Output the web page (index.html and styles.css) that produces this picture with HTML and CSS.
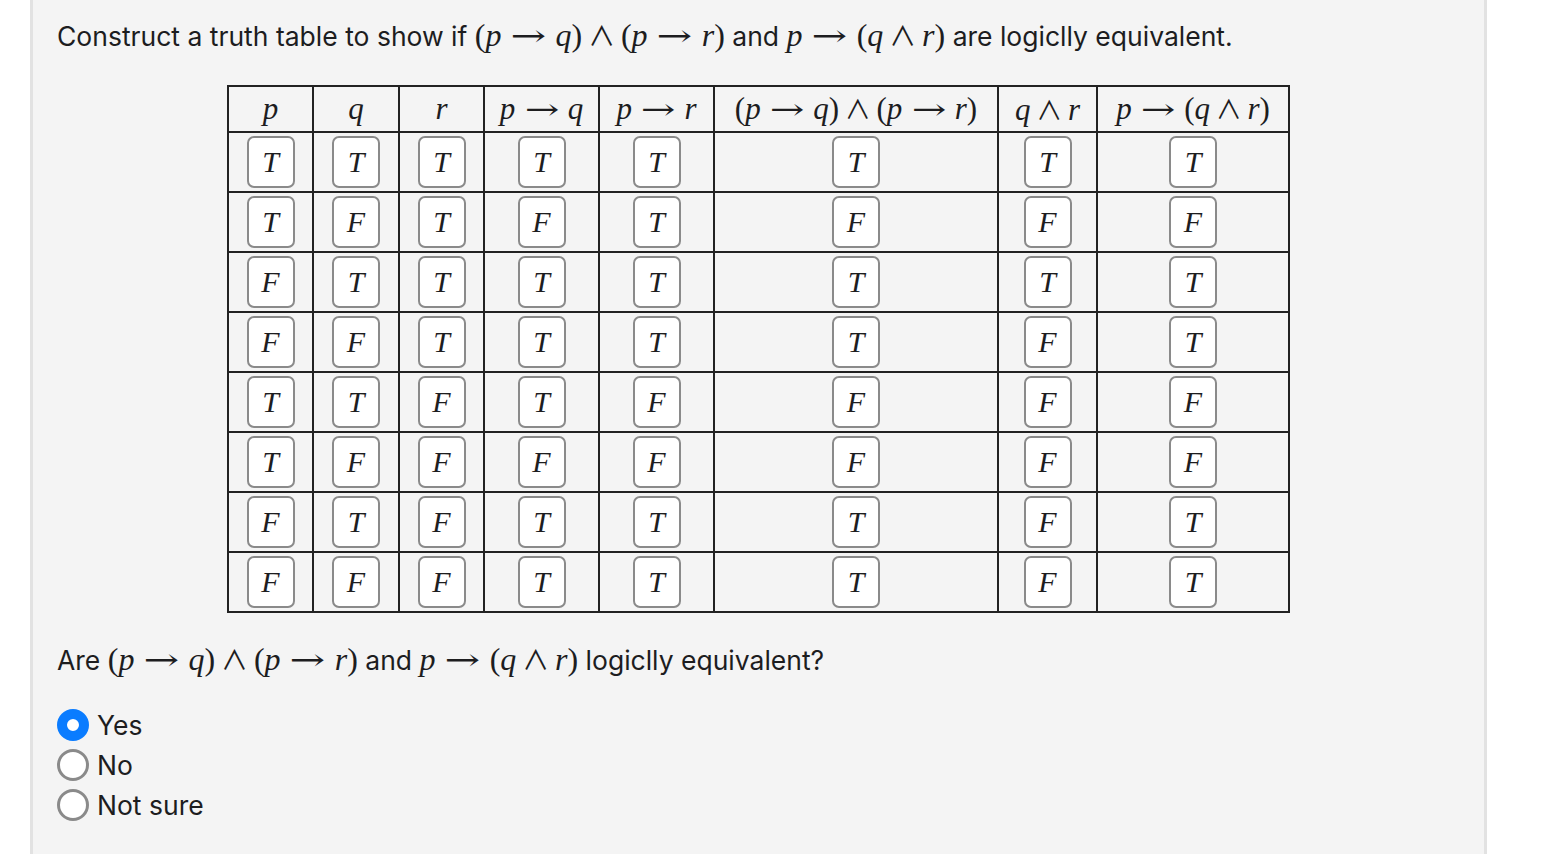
FILE: index.html
```html
<!DOCTYPE html>
<html>
<head>
<meta charset="utf-8">
<link rel="stylesheet" href="styles.css">
</head>
<body>
<div class="panel">
  <p class="title">Construct a truth table to show if <span class="m">(<i>p</i><span class="rel">→</span><i>q</i>)<span class="bin">∧</span>(<i>p</i><span class="rel">→</span><i>r</i>)</span> and <span class="m"><i>p</i><span class="rel">→</span>(<i>q</i><span class="bin">∧</span><i>r</i>)</span> are logiclly equivalent.</p>
  <table class="tt">
    <colgroup>
      <col class="c1"><col class="c2"><col class="c3"><col class="c4"><col class="c5"><col class="c6"><col class="c7"><col class="c8">
    </colgroup>
    <thead>
      <tr>
        <th><i>p</i></th>
        <th><i>q</i></th>
        <th><i>r</i></th>
        <th><i>p</i><span class="rel">→</span><i>q</i></th>
        <th><i>p</i><span class="rel">→</span><i>r</i></th>
        <th>(<i>p</i><span class="rel">→</span><i>q</i>)<span class="bin">∧</span>(<i>p</i><span class="rel">→</span><i>r</i>)</th>
        <th><i>q</i><span class="bin">∧</span><i>r</i></th>
        <th><i>p</i><span class="rel">→</span>(<i>q</i><span class="bin">∧</span><i>r</i>)</th>
      </tr>
    </thead>
    <tbody>
      <tr><td><span class="box">T</span></td><td><span class="box">T</span></td><td><span class="box">T</span></td><td><span class="box">T</span></td><td><span class="box">T</span></td><td><span class="box">T</span></td><td><span class="box">T</span></td><td><span class="box">T</span></td></tr>
      <tr><td><span class="box">T</span></td><td><span class="box">F</span></td><td><span class="box">T</span></td><td><span class="box">F</span></td><td><span class="box">T</span></td><td><span class="box">F</span></td><td><span class="box">F</span></td><td><span class="box">F</span></td></tr>
      <tr><td><span class="box">F</span></td><td><span class="box">T</span></td><td><span class="box">T</span></td><td><span class="box">T</span></td><td><span class="box">T</span></td><td><span class="box">T</span></td><td><span class="box">T</span></td><td><span class="box">T</span></td></tr>
      <tr><td><span class="box">F</span></td><td><span class="box">F</span></td><td><span class="box">T</span></td><td><span class="box">T</span></td><td><span class="box">T</span></td><td><span class="box">T</span></td><td><span class="box">F</span></td><td><span class="box">T</span></td></tr>
      <tr><td><span class="box">T</span></td><td><span class="box">T</span></td><td><span class="box">F</span></td><td><span class="box">T</span></td><td><span class="box">F</span></td><td><span class="box">F</span></td><td><span class="box">F</span></td><td><span class="box">F</span></td></tr>
      <tr><td><span class="box">T</span></td><td><span class="box">F</span></td><td><span class="box">F</span></td><td><span class="box">F</span></td><td><span class="box">F</span></td><td><span class="box">F</span></td><td><span class="box">F</span></td><td><span class="box">F</span></td></tr>
      <tr><td><span class="box">F</span></td><td><span class="box">T</span></td><td><span class="box">F</span></td><td><span class="box">T</span></td><td><span class="box">T</span></td><td><span class="box">T</span></td><td><span class="box">F</span></td><td><span class="box">T</span></td></tr>
      <tr><td><span class="box">F</span></td><td><span class="box">F</span></td><td><span class="box">F</span></td><td><span class="box">T</span></td><td><span class="box">T</span></td><td><span class="box">T</span></td><td><span class="box">F</span></td><td><span class="box">T</span></td></tr>
    </tbody>
  </table>
  <p class="question">Are <span class="m">(<i>p</i><span class="rel">→</span><i>q</i>)<span class="bin">∧</span>(<i>p</i><span class="rel">→</span><i>r</i>)</span> and <span class="m"><i>p</i><span class="rel">→</span>(<i>q</i><span class="bin">∧</span><i>r</i>)</span> logiclly equivalent?</p>
  <div class="options">
    <label class="opt"><span class="radio on"></span><span>Yes</span></label>
    <label class="opt"><span class="radio"></span><span>No</span></label>
    <label class="opt"><span class="radio"></span><span>Not sure</span></label>
  </div>
</div>
</body>
</html>
```

FILE: styles.css
```css
html, body {
  margin: 0;
  padding: 0;
  background: #ffffff;
}
body {
  font-family: "Inter", "Liberation Sans", sans-serif;
  color: #1d1d1f;
}
.panel {
  margin-left: 30px;
  width: 1457px;
  min-height: 854px;
  box-sizing: border-box;
  background: #f4f4f4;
  border-left: 3px solid #e2e2e2;
  border-right: 3px solid #e2e2e2;
  padding: 14px 24px 0 24px;
}
.title {
  margin: 0;
  font-size: 26.5px;
  line-height: 44px;
}
.m {
  font-family: "Liberation Serif", "DejaVu Serif", serif;
  font-size: 32px;
  line-height: 30px;
  white-space: nowrap;
}
.m i, .tt i {
  font-family: "Liberation Serif", "DejaVu Serif", serif;
  font-style: italic;
  font-weight: 500;
}
.rel {
  display: inline-block;
  font-family: "DejaVu Serif", "Liberation Serif", serif;
  font-size: 0.92em;
  width: 0.84em;
  text-align: center;
  transform: scaleX(1.45);
  margin: 0 0.5em;
}
.bin {
  display: inline-block;
  font-family: "Noto Sans CJK SC", "DejaVu Sans", sans-serif;
  font-size: 0.84em;
  margin: 0 0.22em;
}
.tt {
  margin: 27px auto 0 auto;
  border-collapse: collapse;
  border: 2px solid #222;
  font-family: "Liberation Serif", "DejaVu Serif", serif;
  table-layout: fixed;
}
.c1 { width: 85px; }
.c2 { width: 86px; }
.c3 { width: 85px; }
.c4 { width: 115px; }
.c5 { width: 115px; }
.c6 { width: 284px; }
.c7 { width: 99px; }
.c8 { width: 192px; }
.tt th, .tt td {
  border: 2px solid #222;
  text-align: center;
  padding: 0;
}
.tt th {
  height: 44px;
  font-size: 31px;
  line-height: 30px;
  font-weight: normal;
  white-space: nowrap;
}
.tt td {
  height: 58px;
}
.box {
  display: inline-flex;
  align-items: center;
  justify-content: center;
  width: 48px;
  height: 52px;
  box-sizing: border-box;
  border: 2px solid #8a8a8a;
  border-radius: 7px;
  background: #ffffff;
  font-size: 30px;
  font-style: italic;
  vertical-align: middle;
}
.question {
  margin: 25px 0 0 0;
  font-size: 26.5px;
  line-height: 44px;
}
.options {
  margin-top: 27px;
  display: flex;
  flex-direction: column;
  gap: 8px;
}
.opt {
  display: flex;
  align-items: center;
  gap: 8px;
  font-size: 26.5px;
  height: 32px;
}
.radio {
  width: 32px;
  height: 32px;
  box-sizing: border-box;
  border-radius: 50%;
  border: 3px solid #8a8a8a;
  background: #ffffff;
}
.radio.on {
  border: 10px solid #0a7cff;
}
```
